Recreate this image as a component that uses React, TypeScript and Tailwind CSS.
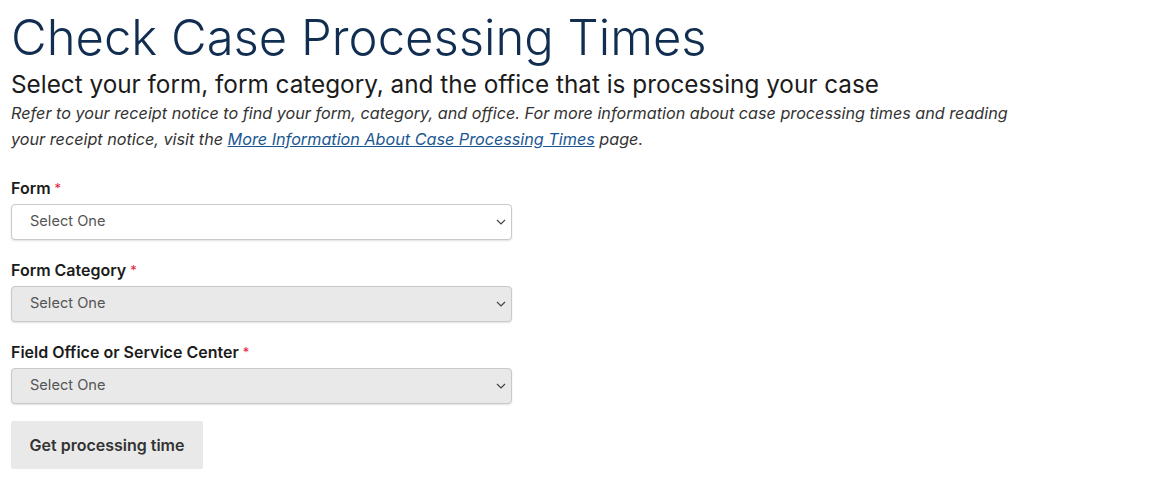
import React from "react";

function Chevron() {
  return (
    <svg width="10" height="6" viewBox="0 0 10 6" className="absolute right-[5px] top-1/2 -translate-y-1/2" fill="none">
      <path d="M1 1l4 4 4-4" stroke="#444" strokeWidth="1.2" />
    </svg>
  );
}

function SelectBox({ disabled }: { disabled?: boolean }) {
  return (
    <div
      className={`relative w-[501px] h-[36px] rounded-[4px] border border-[#c9c9c9] shadow-[0_1px_2px_rgba(0,0,0,0.12)] flex items-center pl-[18px] text-[14.6px] text-[#555] ${
        disabled ? "bg-[#e9e9e9]" : "bg-white"
      }`}
    >
      Select One
      <Chevron />
    </div>
  );
}

function Label({ text }: { text: string }) {
  return (
    <div className="text-[16px] font-semibold text-[#1b1b1b] leading-[20px] mb-[6px]">
      {text} <span className="text-[#e31c3d] font-normal text-[13px] align-top">*</span>
    </div>
  );
}

export default function App() {
  return (
    <div className="bg-white w-[1158px] h-[488px] pl-[11px] pt-[8px] font-['Inter',sans-serif]">
      <h1 className="text-[#112e51] text-[49px] leading-[60px] font-light">
        Check Case Processing Times
      </h1>
      <h2 className="text-[#1b1b1b] text-[24.3px] leading-[32px]">
        Select your form, form category, and the office that is processing your case
      </h2>
      <p className="italic text-[#333] text-[16.2px] leading-[26px] mt-[0px] w-[1010px]">
        Refer to your receipt notice to find your form, category, and office. For more information about case processing times and reading your receipt notice, visit the{" "}
        <a className="text-[#1a5792] underline">More Information About Case Processing Times</a> page.
      </p>
      <div className="mt-[26px] flex flex-col items-start">
        <Label text="Form" />
        <SelectBox />
        <div className="mt-[20px]">
          <Label text="Form Category" />
          <SelectBox disabled />
        </div>
        <div className="mt-[20px]">
          <Label text="Field Office or Service Center" />
          <SelectBox disabled />
        </div>
        <button className="mt-[17px] w-[192px] h-[48px] bg-[#e9e9e9] rounded-[2px] text-[16px] font-semibold text-[#333]">
          Get processing time
        </button>
      </div>
    </div>
  );
}
